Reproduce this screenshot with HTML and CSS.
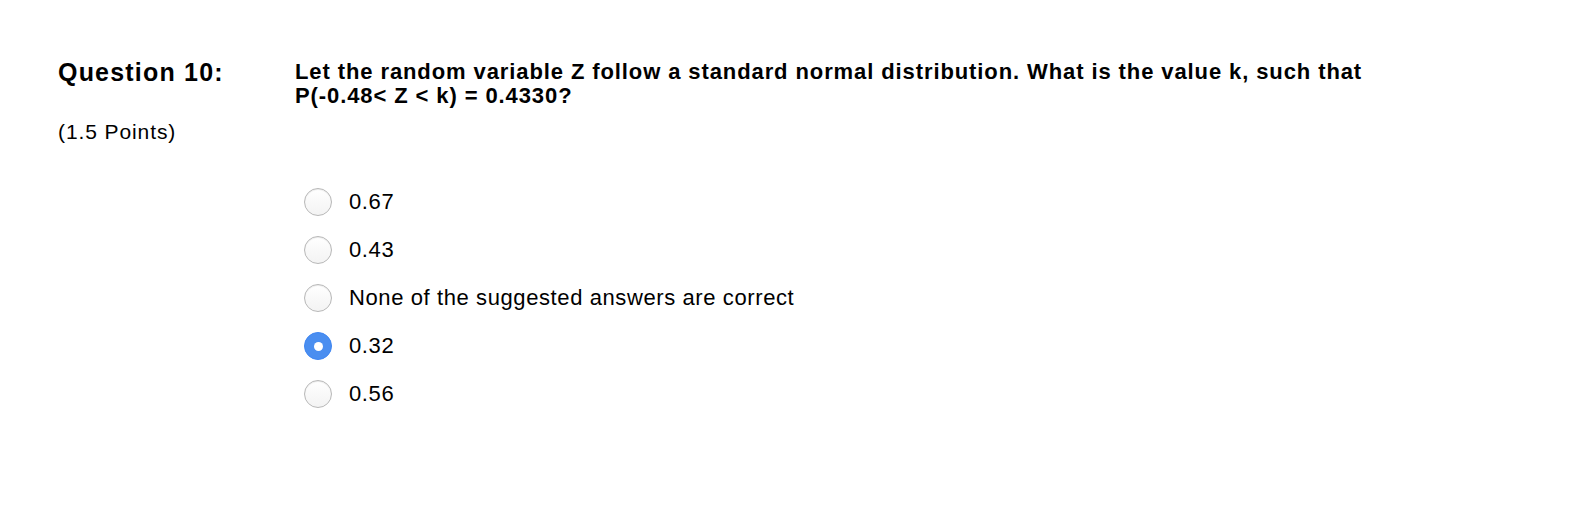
FILE: index.html
```html
<!DOCTYPE html>
<html>
<head>
<meta charset="utf-8">
<link rel="stylesheet" href="styles.css">
</head>
<body>
<div class="question">
  <div class="meta">
    <div class="qnum">Question 10:</div>
    <div class="points">(1.5 Points)</div>
  </div>
  <div class="body">
    <div class="prompt">Let the random variable Z follow a standard normal distribution. What is the value k, such that<br>P(-0.48&lt; Z &lt; k) = 0.4330?</div>
    <div class="options">
      <label class="option"><span class="radio"></span><span class="label">0.67</span></label>
      <label class="option"><span class="radio"></span><span class="label">0.43</span></label>
      <label class="option"><span class="radio"></span><span class="label">None of the suggested answers are correct</span></label>
      <label class="option"><span class="radio checked"></span><span class="label">0.32</span></label>
      <label class="option"><span class="radio"></span><span class="label">0.56</span></label>
    </div>
  </div>
</div>
</body>
</html>
```
FILE: styles.css
```css
html, body {
  margin: 0;
  padding: 0;
  background: #ffffff;
}
body {
  font-family: "Liberation Sans", Arial, Helvetica, sans-serif;
  color: #000;
}
.question {
  display: flex;
  padding: 57px 0 0 58px;
}
.meta {
  width: 237px;
  flex: none;
}
.qnum {
  font-size: 25px;
  font-weight: bold;
  line-height: 30px;
  letter-spacing: 1.2px;
}
.points {
  font-size: 21px;
  line-height: 24px;
  letter-spacing: 0.9px;
  margin-top: 33px;
}
.body {
  flex: 1;
}
.prompt {
  font-size: 22px;
  font-weight: bold;
  line-height: 24px;
  letter-spacing: 0.9px;
  padding-top: 3px;
}
.options {
  display: flex;
  flex-direction: column;
  gap: 20px;
  margin-top: 80px;
  margin-left: 9px;
}
.option {
  display: flex;
  align-items: center;
  height: 28px;
}
.radio {
  width: 26px;
  height: 26px;
  border-radius: 50%;
  border: 1px solid #b8b8b8;
  background: linear-gradient(#ffffff, #f3f3f3);
  box-shadow: inset 0 1px 1px rgba(0,0,0,0.08);
  flex: none;
  position: relative;
}
.radio.checked {
  border-color: #3f86f2;
  background: #4a8ef0;
  box-shadow: none;
}
.radio.checked::after {
  content: "";
  position: absolute;
  left: 50%;
  top: 50%;
  width: 9px;
  height: 9px;
  margin: -4.5px 0 0 -4.5px;
  border-radius: 50%;
  background: #fff;
}
.label {
  font-size: 22px;
  letter-spacing: 0.6px;
  margin-left: 17px;
}
```
